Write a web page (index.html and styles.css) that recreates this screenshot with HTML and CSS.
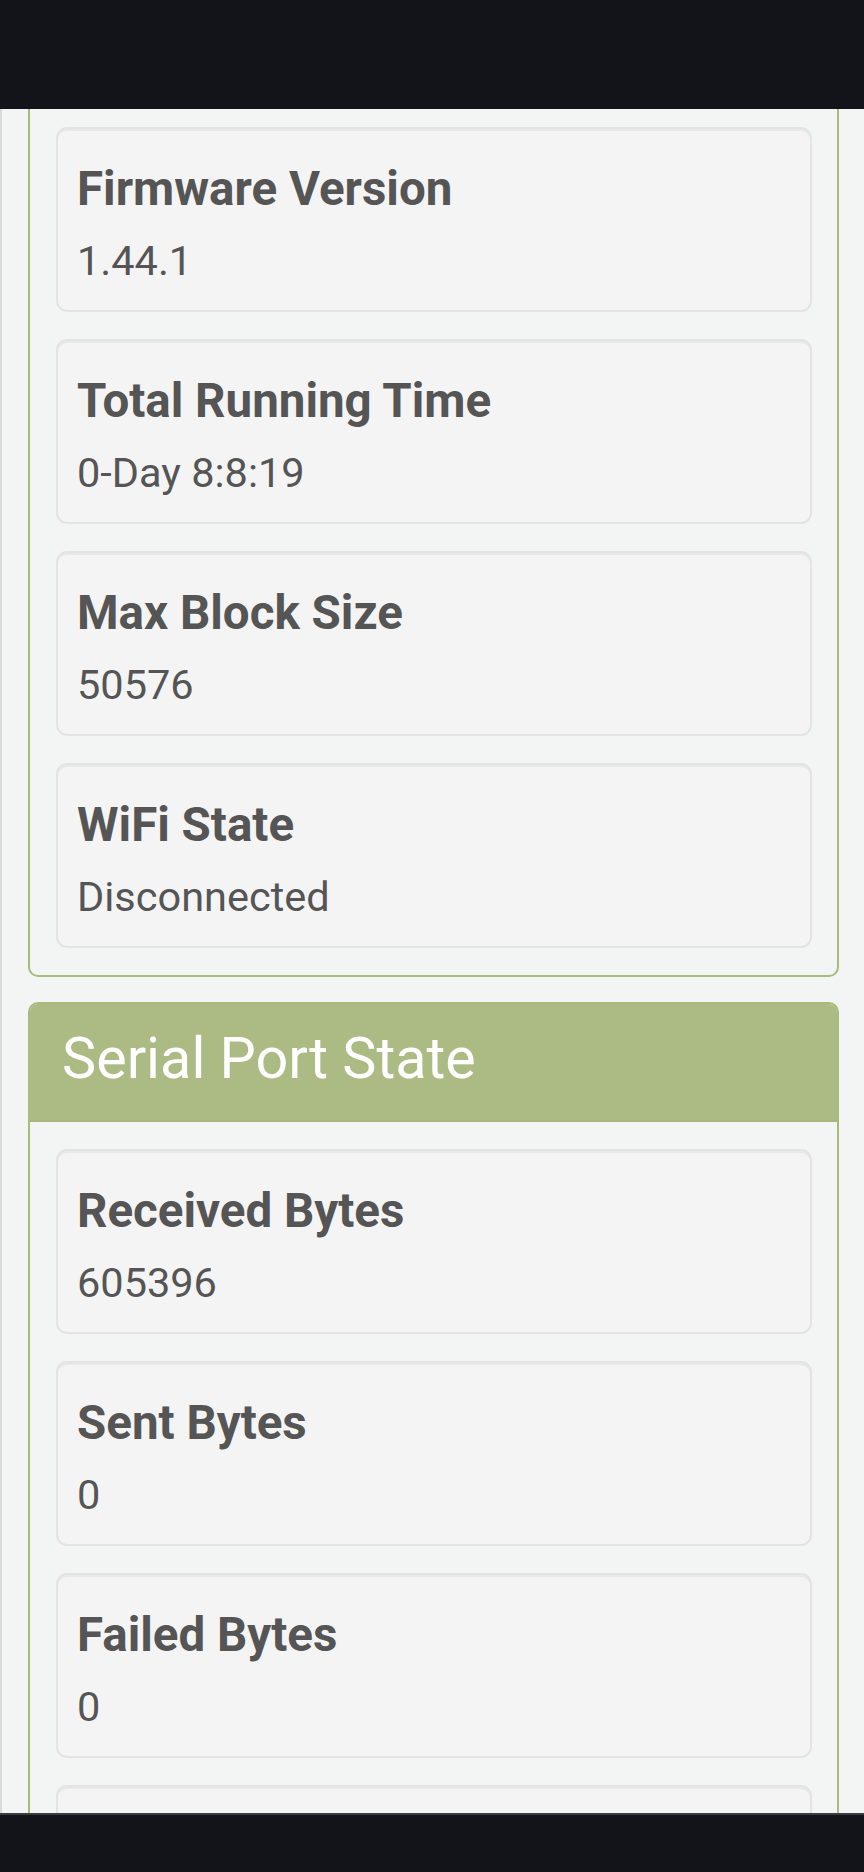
FILE: index.html
```html
<!DOCTYPE html>
<html lang="en">
<head>
<meta charset="UTF-8" />
<meta name="viewport" content="width=device-width, initial-scale=1" />
<title>Device State</title>
<link rel="stylesheet" href="styles.css">
</head>
<body>

<div class="status-bar"></div>

<main class="content">
  <section class="panel panel-cut">
    <div class="item">
      <h3>Firmware Version</h3>
      <p>1.44.1</p>
    </div>
    <div class="item">
      <h3>Total Running Time</h3>
      <p>0-Day 8:8:19</p>
    </div>
    <div class="item">
      <h3>Max Block Size</h3>
      <p>50576</p>
    </div>
    <div class="item">
      <h3>WiFi State</h3>
      <p>Disconnected</p>
    </div>
  </section>

  <section class="panel">
    <h2 class="panel-head">Serial Port State</h2>
    <div class="item">
      <h3>Received Bytes</h3>
      <p>605396</p>
    </div>
    <div class="item">
      <h3>Sent Bytes</h3>
      <p>0</p>
    </div>
    <div class="item">
      <h3>Failed Bytes</h3>
      <p>0</p>
    </div>
    <!-- next item scrolled below the fold -->
    <div class="item item-empty"></div>
  </section>
</main>

<div class="nav-bar"></div>

</body>
</html>
```

FILE: styles.css
```css
html, body {
  margin: 0; height: 100%;
}
body {
  font-family: Roboto, 'Noto Sans', sans-serif;
  background: #f3f5f4; color: #555;
  display: flex; flex-direction: column;
  height: 1872px; overflow: hidden;
}
.status-bar {
  height: 109px; flex: none;
  background: #131419;
}
.nav-bar {
  height: 57px; flex: none;
  background: #131419;
  border-top: 2px solid #3a3c42;
}
.content {
  flex: 1; overflow: hidden;
  padding: 0 25px 0 26px;
  border-left: 2px solid #d9dbda;
}
.panel {
  border: 2px solid #a8ba7c;
  border-radius: 10px;
  padding: 0 25px 27px 26px;
  margin-bottom: 25px;
}
.panel-cut {
  border-top: none;
  border-radius: 0 0 10px 10px;
  padding-top: 18px;
}
.panel-head {
  margin: 0 -25px 27px -26px;
  padding: 20px 32px 27px;
  background: #acbb83;
  border-bottom: 2px solid #a4b67a;
  border-radius: 8px 8px 0 0;
  color: white;
  font-size: 57.5px; font-weight: 400;
  line-height: 69px;
}
.item {
  background: #f4f4f4;
  border: 2px solid #e3e3e3;
  border-radius: 11px;
  box-shadow: inset 0 2px 0 #e8e8e8;
  padding: 33px 19px 25px;
  margin-bottom: 27px;
}
.item:last-child {
  margin-bottom: 0;
}
.item-empty {
  height: 123px;
  box-sizing: border-box;
}
.item h3 {
  margin: 0 0 21px;
  font-size: 47.5px; font-weight: 700;
  line-height: 54px;
}
.item p {
  margin: 0;
  font-size: 41.5px;
  line-height: 48px;
}
```
